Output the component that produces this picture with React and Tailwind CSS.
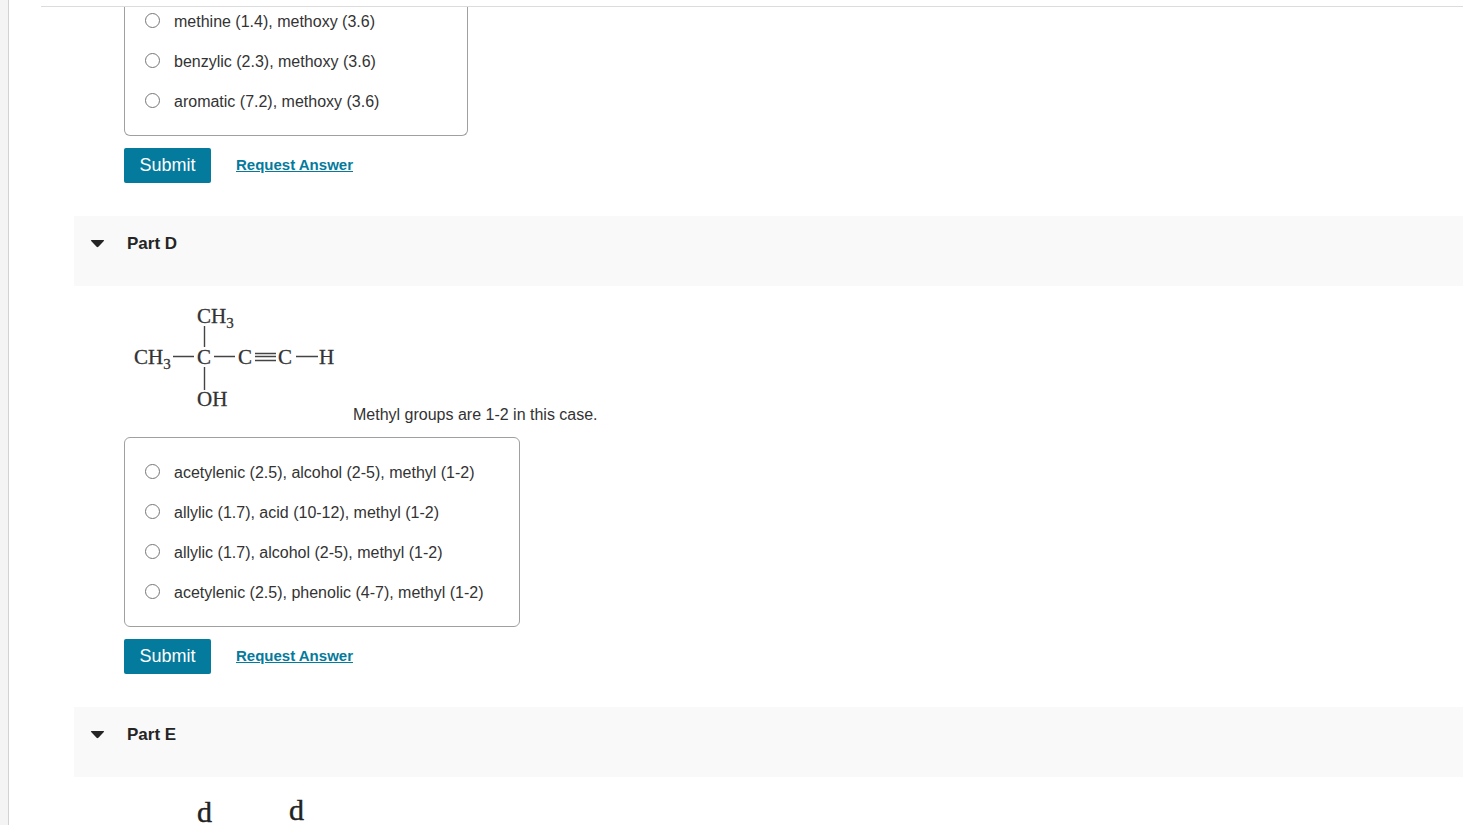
const PART_C = [
  'methine (1.4), methoxy (3.6)',
  'benzylic (2.3), methoxy (3.6)',
  'aromatic (7.2), methoxy (3.6)',
];

const PART_D = [
  'acetylenic (2.5), alcohol (2-5), methyl (1-2)',
  'allylic (1.7), acid (10-12), methyl (1-2)',
  'allylic (1.7), alcohol (2-5), methyl (1-2)',
  'acetylenic (2.5), phenolic (4-7), methyl (1-2)',
];

function Choices({ name, options, className }) {
  return (
    <fieldset className={`w-fit rounded-md border border-[#a0a0a0] py-3.5 pl-5 ${className}`}>
      {options.map((option) => (
        <label key={option} className="flex h-10 items-center gap-3.5 text-base text-[#333333]">
          <input type="radio" name={name} value={option} className="mx-0 mt-0 mb-0.5 size-[15px]" />
          <span className="pt-0.5">{option}</span>
        </label>
      ))}
    </fieldset>
  );
}

function Actions() {
  return (
    <div className="mt-3 flex items-center gap-[25px]">
      <button type="button" className="h-[35px] w-[87px] rounded-xs bg-[#047a9c] pb-0.5 text-lg leading-6 text-white">
        Submit
      </button>
      <a href="#answer" className="pb-0.5 text-[15px] leading-5 font-bold text-[#047a9c] underline">
        Request Answer
      </a>
    </div>
  );
}

function PartHeader({ title }) {
  return (
    <header className="h-[70px] bg-[#f9f9f9] pt-4 pl-4">
      <button type="button" aria-expanded="true" className="flex items-center gap-[22px] text-[17px] leading-6 font-bold text-[#252525]">
        <svg width="15" height="8" viewBox="0 0 15 8" fill="currentColor" aria-hidden="true">
          <path d="M1.6 0h11.8q1.2 0 .4.9L8.4 6.8q-.9.9-1.8 0L1.2.9Q.4 0 1.6 0z" />
        </svg>
        {title}
      </button>
    </header>
  );
}

// 2-methyl-3-butyn-2-ol
function Alkynol() {
  return (
    <svg width="229" height="131" viewBox="0 0 229 131" role="img" aria-label="2-methyl-3-butyn-2-ol" className="font-['Liberation_Serif',serif]">
      <g fill="#333333" stroke="#333333" strokeWidth="0.3" fontSize="21">
        <text x="73" y="27">CH<tspan fontSize="15" dy="5">3</tspan></text>
        <text x="10" y="68">CH<tspan fontSize="15" dy="5">3</tspan></text>
        <text x="73" y="68">C</text>
        <text x="114" y="68">C</text>
        <text x="154" y="68">C</text>
        <text x="195" y="68">H</text>
        <text x="73" y="110">OH</text>
      </g>
      <g stroke="#444444" strokeWidth="1.4" fill="none">
        <path d="M49 60.5h21M90 60.5h21M172 60.5h22" />
        <path d="M80.5 30v21M80.5 71v23" />
        <path d="M131 57.5h21M131 60.5h21M131 64.5h21" />
      </g>
    </svg>
  );
}

function ProtonLabels() {
  return (
    <svg width="229" height="129" viewBox="0 0 229 129" role="img" aria-label="Structure with d protons" className="font-['Liberation_Serif',serif]">
      <g fill="#222222" stroke="#222222" strokeWidth="0.4" fontSize="30">
        <text x="73" y="45">d</text>
        <text x="165" y="43">d</text>
      </g>
    </svg>
  );
}

export default function App() {
  return (
    <div className="flex h-screen overflow-hidden bg-white font-['Liberation_Sans',Arial,sans-serif]">
      <aside className="w-[9px] shrink-0 border-r border-[#d2d2d2] bg-[#f4f4f4]" />
      <div className="flex min-w-0 flex-1 flex-col pt-1.5 pl-8">
        <main className="min-h-0 flex-1 overflow-hidden border-t border-[#dcdcdc] pl-[33px]">
          <section className="-mt-1.5 pl-[50px]">
            <Choices name="part-c" options={PART_C} className="rounded-t-none border-t-0 pt-0 pr-[88px]" />
            <Actions />
          </section>

          <section className="mt-[33px]">
            <PartHeader title="Part D" />
            <div className="pl-[50px]">
              <div className="flex h-[151px] items-end pb-2.5">
                <Alkynol />
                <p className="text-base leading-6 text-[#333333]">Methyl groups are 1-2 in this case.</p>
              </div>
              <Choices name="part-d" options={PART_D} className="pr-9" />
              <Actions />
            </div>
          </section>

          <section className="mt-[33px]">
            <PartHeader title="Part E" />
            <div className="pl-[50px]">
              <ProtonLabels />
            </div>
          </section>
        </main>
      </div>
    </div>
  );
}
